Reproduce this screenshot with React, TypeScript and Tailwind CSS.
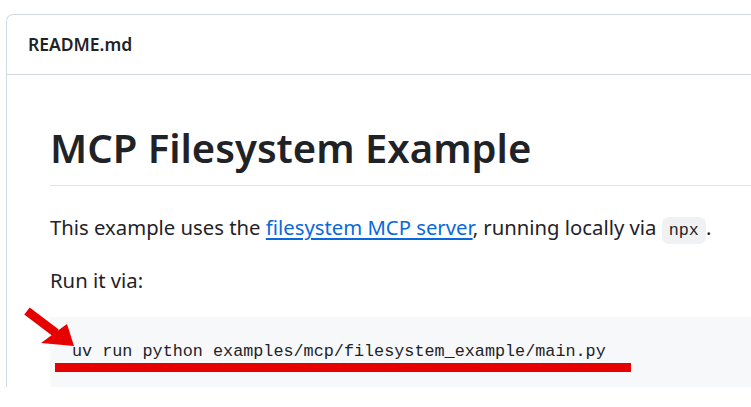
const sans = { fontFamily: '"Noto Sans", "Open Sans", sans-serif' }

export default function App() {
  return (
    <div className="relative h-[407px] w-[751px] overflow-hidden bg-white pl-[6px] pt-[14px] text-[#1f2328]" style={sans}>
      <div className="rounded-tl-[7px] border-l border-t border-[#d1d9e0]">
        {/* header */}
        <div className="flex h-[60px] items-center border-b border-[#d1d9e0] pl-[21px] text-[17.5px] font-semibold">
          README.md
        </div>

        {/* body */}
        <div className="pl-[43px] pt-[48px]">
          <h1 className="border-b border-[#e1e5e9] pb-[12px] text-[40px] font-semibold leading-[50px]">
            MCP Filesystem Example
          </h1>

          <p className="mt-[26px] text-[20.3px] leading-[30px]">
            This example uses the{' '}
            <a className="text-[#0969da] underline underline-offset-[3px]" href="#">
              filesystem MCP server
            </a>
            , running locally via{' '}
            <code className="rounded-[7px] bg-[#eff1f3] px-[7px] py-[4px] font-['Liberation_Mono',monospace] text-[16.8px]">
              npx
            </code>
            .
          </p>

          <p className="mt-[19px] text-[20.3px] leading-[30px]">Run it via:</p>

          <div className="relative mt-[22px] h-[70px] bg-[#f6f8fa] pl-[22px] pt-[22px]">
            <pre className="font-['Liberation_Mono',monospace] text-[16.8px] leading-[26px]">
              uv run python examples/mcp/filesystem_example/main.py
            </pre>
            {/* red annotation underline */}
            <div className="absolute left-[5px] top-[46px] h-[9px] w-[576px] bg-[#e60000]" />
          </div>
        </div>
      </div>

      {/* red annotation arrow */}
      <svg className="absolute left-[20px] top-[304px]" width="60" height="50" viewBox="0 0 60 50">
        <line x1="7" y1="7" x2="36" y2="29" stroke="#e60000" strokeWidth="9" strokeLinecap="butt" />
        <polygon points="21,39 47,20 54,42" fill="#e60000" />
      </svg>
    </div>
  )
}
